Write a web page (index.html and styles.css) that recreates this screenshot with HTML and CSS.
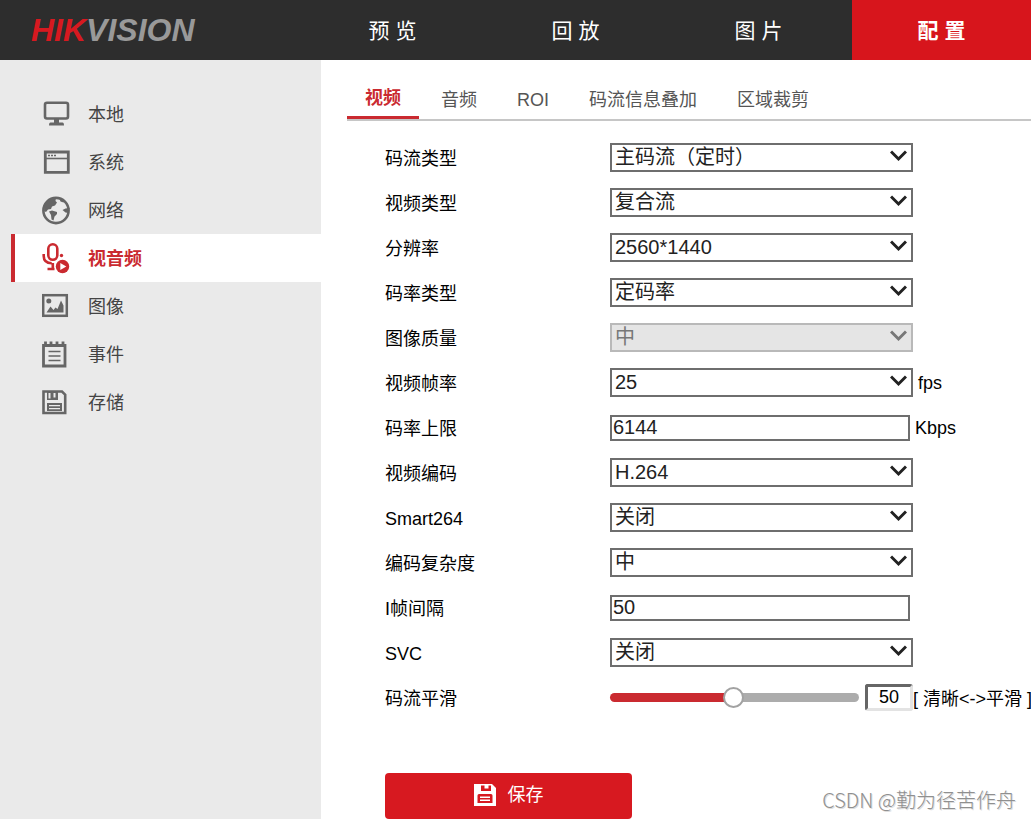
FILE: index.html
```html
<!DOCTYPE html>
<html lang="zh-CN">
<head>
<meta charset="utf-8">
<title>配置 - 视音频</title>
<link rel="stylesheet" href="styles.css">
</head>
<body>
<header class="topbar">
  <a class="logo" href="#"><span class="logo-hik">HIK</span>VISION</a>
  <nav class="topnav">
    <a href="#">预 览</a>
    <a href="#">回 放</a>
    <a href="#">图 片</a>
    <a href="#" class="current">配 置</a>
  </nav>
</header>
<div class="body">
  <nav class="sidebar">
    <a href="#">
      <svg class="icon" viewBox="0 0 28 32"><rect x="3" y="4.700" width="23" height="15.800" rx="2" fill="none" stroke="currentColor" stroke-width="2.600"/><path d="M12 21h5v3.500h-5zM8.500 24.500h12q1.500 0 1.500 3H7q0-3 1.500-3z" fill="currentColor"/></svg>
      <span>本地</span></a>
    <a href="#">
      <svg class="icon" viewBox="0 0 28 32"><path d="M3.300 6h23v20.300h-23z" fill="none" stroke="currentColor" stroke-width="2.800"/><path d="M3.500 12.500h23" stroke="currentColor" stroke-width="1.600"/><path d="M6 9.500h2M9 9.500h2M12 9.500h2" stroke="currentColor" stroke-width="1.500"/></svg>
      <span>系统</span></a>
    <a href="#">
      <svg class="icon" viewBox="0 0 28 32"><circle cx="14" cy="16.500" r="12.600" fill="none" stroke="currentColor" stroke-width="2.600"/><path d="M2 17Q2 7 9 4.500l5-1-.5 3.500 1.500 1.500-2 3-3 1-1 2.500-3 .5-2 2.500zM7 17.500l3-1 5 1.500v2l-2.500 2.500-1 4-2-1-.5-4.500zM20.500 16l3-1.500 4-.5-1 5-3-.5zM17.500 5l5 2-1 1.500-3-1z" fill="currentColor"/></svg>
      <span>网络</span></a>
    <a href="#" class="current">
      <svg class="icon" viewBox="0 0 28 32"><g fill="none" stroke="currentColor" stroke-width="2.600"><rect x="6.300" y="2.300" width="9" height="15.500" rx="4.500"/><path d="M1.700 12v2q0 7 8 7.200M10.800 21v6M5.500 27h7"/></g><circle cx="19.500" cy="13.500" r="1.700" fill="currentColor"/><circle cx="20.500" cy="24.500" r="6.700" fill="currentColor"/><path d="M18.300 21v7l6-3.500z" fill="#fff"/></svg>
      <span>视音频</span></a>
    <a href="#">
      <svg class="icon" viewBox="0 0 28 32"><rect x="1.200" y="5.200" width="23.600" height="20.600" fill="none" stroke="currentColor" stroke-width="2.500"/><circle cx="6.800" cy="11" r="2.500" fill="currentColor"/><path d="M4.500 22.500l4-6 3 3.500 2-2.500 2 1.500 3.500-8.500 2.500 5v7z" fill="currentColor"/></svg>
      <span>图像</span></a>
    <a href="#">
      <svg class="icon" viewBox="0 0 28 32"><path d="M1.500 7.500h21.500v20.500h-21.500zM3.500 3.500v4M9 3.500v4M15 3.500v4M21 3.500v4" fill="none" stroke="currentColor" stroke-width="2.800"/><path d="M6.500 13.500h12M6.500 18h12M6.500 22.500h12" stroke="currentColor" stroke-width="1.600"/></svg>
      <span>事件</span></a>
    <a href="#">
      <svg class="icon" viewBox="0 0 28 32"><path d="M1.500 5.500h18.500l3.200 3.200v18.300h-21.700z" fill="none" stroke="currentColor" stroke-width="2.600"/><path d="M5 5h11v9H5zM5 17h15v8H5z" fill="currentColor"/><path d="M11.500 7h2v4.500h-2zM6.500 7h2v5.500h-2zM7 19h11v1.200H7zM7 22h11v1.200H7z" fill="#eaeaea"/></svg>
      <span>存储</span></a>
  </nav>
  <main class="content">
    <nav class="tabs">
      <a href="#" class="current">视频</a>
      <a href="#">音频</a>
      <a href="#">ROI</a>
      <a href="#">码流信息叠加</a>
      <a href="#">区域裁剪</a>
    </nav>
    <form class="form">
      <div class="row"><label for="stream">码流类型</label><select id="stream"><option>主码流（定时）</option></select></div>
      <div class="row"><label for="vtype">视频类型</label><select id="vtype"><option>复合流</option></select></div>
      <div class="row"><label for="res">分辨率</label><select id="res"><option>2560*1440</option></select></div>
      <div class="row"><label for="brtype">码率类型</label><select id="brtype"><option>定码率</option></select></div>
      <div class="row"><label for="quality">图像质量</label><select id="quality" disabled><option>中</option></select></div>
      <div class="row"><label for="fps">视频帧率</label><select id="fps"><option>25</option></select><span class="unit">fps</span></div>
      <div class="row"><label for="bitrate">码率上限</label><input class="text" id="bitrate" type="text" value="6144"><span class="unit">Kbps</span></div>
      <div class="row"><label for="codec">视频编码</label><select id="codec"><option>H.264</option></select></div>
      <div class="row"><label for="smart">Smart264</label><select id="smart"><option>关闭</option></select></div>
      <div class="row"><label for="complexity">编码复杂度</label><select id="complexity"><option>中</option></select></div>
      <div class="row"><label for="iframe">I帧间隔</label><input class="text" id="iframe" type="text" value="50"></div>
      <div class="row"><label for="svc">SVC</label><select id="svc"><option>关闭</option></select></div>
      <div class="row"><label for="smooth">码流平滑</label><input class="slider" id="smooth" type="range" min="1" max="100" value="50"><input class="amount" type="text" value="50" aria-label="码流平滑值"><span class="range-note">[ 清晰&lt;-&gt;平滑 ]</span></div>
      <button class="save" type="button">
        <svg class="save-icon" viewBox="0 0 22 22"><path d="M0 0h18l4 4v18H0z" fill="#fff"/><path d="M5 1.500h2v5.500h10V1.500h-2.500v3h-4v-3zM3.500 11.500q0-1.500 1.500-1.500h12q1.500 0 1.500 1.500V19h-15z" fill="#d71920"/><path d="M6 12.500h10v1.500H6zM6 15.500h10v1.500H6z" fill="#fff"/></svg>
        保存</button>
    </form>
  </main>
</div>
<div class="watermark">CSDN @勤为径苦作舟</div>
</body>
</html>
```
FILE: styles.css
```css
* { box-sizing: border-box; }

body {
  margin: 0;
  min-height: 100vh;
  display: flex;
  flex-direction: column;
  position: relative;
  background: #fff;
  color: #000;
  font: 400 18px/24px "Liberation Sans", "Noto Sans CJK SC", sans-serif;
}

a { color: inherit; text-decoration: none; }

.topbar {
  display: flex;
  height: 60px;
  background: #2d2d2d;
}

.logo {
  flex: 0 0 303px;
  padding-left: 31px;
  font-size: 32px;
  font-weight: 700;
  font-style: italic;
  line-height: 60px;
  color: #999;
}

.logo-hik { color: #d71920; }

.topnav {
  flex: 1;
  display: grid;
  grid-template-columns: 183px 183px 183px 1fr;
  font-size: 21px;
  line-height: 58px;
  text-align: center;
  color: #fff;
}

.topnav a { padding: 2px 4px 0 0; }

.topnav .current {
  padding-right: 0;
  background: #d7151c;
  font-weight: 700;
}

.body {
  flex: 1;
  display: flex;
}

.sidebar {
  flex: 0 0 321px;
  padding: 30px 0 30px 11px;
  background: #eaeaea;
  color: #444;
}

.sidebar a {
  display: flex;
  align-items: center;
  gap: 18px;
  height: 48px;
  padding-left: 27px;
  border-left: 4px solid transparent;
}

.sidebar span { padding-top: 2px; }

.sidebar .current {
  background: #fff;
  border-color: #ca2a30;
  color: #ca2a30;
  font-weight: 700;
}

.icon {
  width: 28px;
  height: 32px;
  color: #666;
}

.current .icon { color: #ca2a30; }

.content {
  flex: 1;
  min-width: 0;
}

.tabs {
  display: flex;
  gap: 4px;
  height: 61px;
  margin-left: 26px;
  border-bottom: 2px solid #c6c6c6;
  color: #555;
}

.tabs a { padding: 28px 18px 0; }

.tabs .current {
  padding-top: 26px;
  border-bottom: 3px solid #ca2a30;
  color: #ca2a30;
  font-weight: 700;
}

.form {
  display: flex;
  flex-direction: column;
  gap: 16px;
  padding: 22px 0 0 64px;
}

.row {
  display: flex;
  align-items: center;
  height: 29px;
}

.row label {
  flex: 0 0 225px;
  padding-top: 2px;
}

select,
.text {
  flex: 0 0 auto;
  margin: 0;
  border: 2px solid #6e6e6e;
  border-radius: 0;
  background: #fff;
  color: #222;
  font: inherit;
  font-size: 20px;
  line-height: 24px;
}

select {
  width: 303px;
  height: 29px;
  padding: 0 28px 1px 3px;
  appearance: none;
  background: #fff url("data:image/svg+xml,%3Csvg xmlns='http://www.w3.org/2000/svg' width='17' height='12'%3E%3Cpath d='M1 1.500L8.500 9 16 1.500' fill='none' stroke='%23222' stroke-width='3'/%3E%3C/svg%3E") no-repeat right 4px top 5px;
}

select:disabled {
  border-color: #b9b9b9;
  background-color: #e5e5e5;
  background-image: url("data:image/svg+xml,%3Csvg xmlns='http://www.w3.org/2000/svg' width='17' height='12'%3E%3Cpath d='M1 1.500L8.500 9 16 1.500' fill='none' stroke='%23777' stroke-width='3'/%3E%3C/svg%3E");
  color: #777;
  opacity: 1;
}

.text {
  width: 300px;
  height: 26px;
  padding: 0 1px;
}

.unit { margin-left: 5px; }

.slider {
  flex: 0 0 249px;
  height: 21px;
  margin: 0 6px 0 0;
  appearance: none;
  background: none;
}

.slider::-webkit-slider-runnable-track {
  height: 9px;
  border-radius: 5px;
  background: linear-gradient(90deg, #ca2a30 50%, #acacac 50%);
}

.slider::-webkit-slider-thumb {
  appearance: none;
  width: 21px;
  height: 21px;
  margin-top: -6px;
  border: 2px solid #a2a2a2;
  border-radius: 50%;
  background: #fff;
}

.amount {
  flex: 0 0 48px;
  width: 48px;
  height: 27px;
  padding: 0;
  border: 3px solid;
  border-color: #666 #e3e3e3 #e3e3e3 #666;
  border-radius: 3px;
  background: #fff;
  font: inherit;
  text-align: center;
}

.range-note {
  padding-top: 2px;
  white-space: nowrap;
}

.save {
  display: flex;
  align-items: center;
  justify-content: center;
  gap: 12px;
  width: 247px;
  height: 46px;
  margin-top: 45px;
  padding: 0 0 2px;
  border: 0;
  border-radius: 4px;
  background: #d71920;
  color: #fff;
  font: inherit;
}

.save-icon { width: 22px; height: 22px; }

/* overlay stamp in the page corner */
.watermark {
  position: absolute;
  right: 15px;
  bottom: 7px;
  color: #8f8f8f;
  font-size: 20px;
  font-weight: 300;
  font-family: "Noto Sans CJK SC", sans-serif;
  text-shadow: 1px 1px 0 #ddd;
}
```
